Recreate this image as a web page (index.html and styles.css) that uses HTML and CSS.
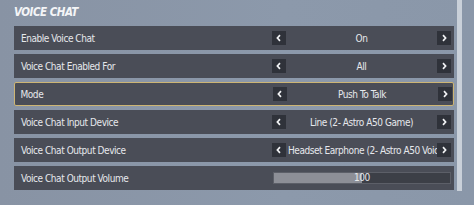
FILE: index.html
```html
<!DOCTYPE html>
<html lang="en">
<head>
    <meta charset="UTF-8">
    <title>Voice Chat Settings</title>
    <link rel="stylesheet" href="styles.css">
</head>
<body>
<div class="screen">
    <div class="panel">
        <h2 class="section-title">VOICE CHAT</h2>
        <div class="row">
            <span class="row-label">Enable Voice Chat</span>
            <div class="selector">
                <span class="arrow"><svg width="14" height="14" viewBox="0 0 14 14"><path d="M8 4.2 L5.4 7 L8 9.8" /></svg></span>
                <span class="value">On</span>
                <span class="arrow"><svg width="14" height="14" viewBox="0 0 14 14"><path d="M6 4.2 L8.6 7 L6 9.8" /></svg></span>
            </div>
        </div>
        <div class="row">
            <span class="row-label">Voice Chat Enabled For</span>
            <div class="selector">
                <span class="arrow"><svg width="14" height="14" viewBox="0 0 14 14"><path d="M8 4.2 L5.4 7 L8 9.8" /></svg></span>
                <span class="value">All</span>
                <span class="arrow"><svg width="14" height="14" viewBox="0 0 14 14"><path d="M6 4.2 L8.6 7 L6 9.8" /></svg></span>
            </div>
        </div>
        <div class="row active">
            <span class="row-label">Mode</span>
            <div class="selector">
                <span class="arrow"><svg width="14" height="14" viewBox="0 0 14 14"><path d="M8 4.2 L5.4 7 L8 9.8" /></svg></span>
                <span class="value">Push To Talk</span>
                <span class="arrow"><svg width="14" height="14" viewBox="0 0 14 14"><path d="M6 4.2 L8.6 7 L6 9.8" /></svg></span>
            </div>
        </div>
        <div class="row">
            <span class="row-label">Voice Chat Input Device</span>
            <div class="selector">
                <span class="arrow"><svg width="14" height="14" viewBox="0 0 14 14"><path d="M8 4.2 L5.4 7 L8 9.8" /></svg></span>
                <span class="value">Line (2- Astro A50 Game)</span>
                <span class="arrow"><svg width="14" height="14" viewBox="0 0 14 14"><path d="M6 4.2 L8.6 7 L6 9.8" /></svg></span>
            </div>
        </div>
        <div class="row">
            <span class="row-label">Voice Chat Output Device</span>
            <div class="selector">
                <span class="arrow"><svg width="14" height="14" viewBox="0 0 14 14"><path d="M8 4.2 L5.4 7 L8 9.8" /></svg></span>
                <span class="value clip">Headset Earphone (2- Astro A50 Voice)</span>
                <span class="arrow"><svg width="14" height="14" viewBox="0 0 14 14"><path d="M6 4.2 L8.6 7 L6 9.8" /></svg></span>
            </div>
        </div>
        <div class="row">
            <span class="row-label">Voice Chat Output Volume</span>
            <div class="slider">
                <div class="slider-fill" style="width: 50%"></div>
                <span class="slider-value">100</span>
            </div>
        </div>
    </div>
    <div class="scrollbar"></div>
</div>
</body>
</html>
```

FILE: styles.css
```css
body {
    margin: 0;
    width: 474px;
    height: 205px;
    overflow: hidden;
    background: linear-gradient(90deg, #8893a4 0%, #8c99ab 60%, #8a97a9 100%);
    font-family: "DejaVu Sans Condensed", "DejaVu Sans", sans-serif;
    color: #e6e8ec;
}
.screen {
    display: flex;
    padding-left: 14px;
}
.panel {
    width: 440px;
}
.section-title {
    margin: 0;
    height: 26px;
    line-height: 25px;
    font-size: 11.5px;
    font-style: italic;
    font-weight: bold;
    letter-spacing: -0.5px;
    color: #f4f5f7;
}
.row {
    display: flex;
    align-items: center;
    height: 24px;
    margin-bottom: 4px;
    background-color: #4a4d57;
    box-sizing: border-box;
}
.row.active {
    border: 1.5px solid #cdb574;
    border-radius: 2px;
}
.row-label {
    flex: 1;
    padding-left: 7px;
    font-size: 10px;
    letter-spacing: -0.45px;
}
.row.active .row-label {
    padding-left: 5.5px;
}
.selector {
    display: flex;
    align-items: center;
    width: 179px;
    margin-right: 3px;
}
.row.active .selector {
    margin-right: 1.5px;
}
.arrow {
    display: flex;
    width: 14px;
    height: 14px;
    background-color: #2f323a;
}
.arrow path {
    fill: none;
    stroke: #f2f3f5;
    stroke-width: 1.7;
}
.value {
    flex: 1;
    text-align: center;
    font-size: 10px;
    letter-spacing: -0.45px;
    white-space: nowrap;
    overflow: hidden;
}
.value.clip {
    text-align: left;
    padding-left: 2px;
}
.slider {
    position: relative;
    width: 178px;
    height: 12px;
    margin-right: 3px;
    background-color: #3c3f47;
    border: 1px solid #5c5f68;
    box-sizing: border-box;
}
.slider-fill {
    height: 100%;
    background-color: #8d8f97;
}
.slider-value {
    position: absolute;
    top: -1px;
    left: 0;
    right: 0;
    text-align: center;
    font-size: 10px;
    letter-spacing: -0.45px;
    line-height: 12px;
}
.scrollbar {
    width: 5px;
    height: 191px;
    margin-left: 3px;
    background-color: #c9d0d9;
}
```
